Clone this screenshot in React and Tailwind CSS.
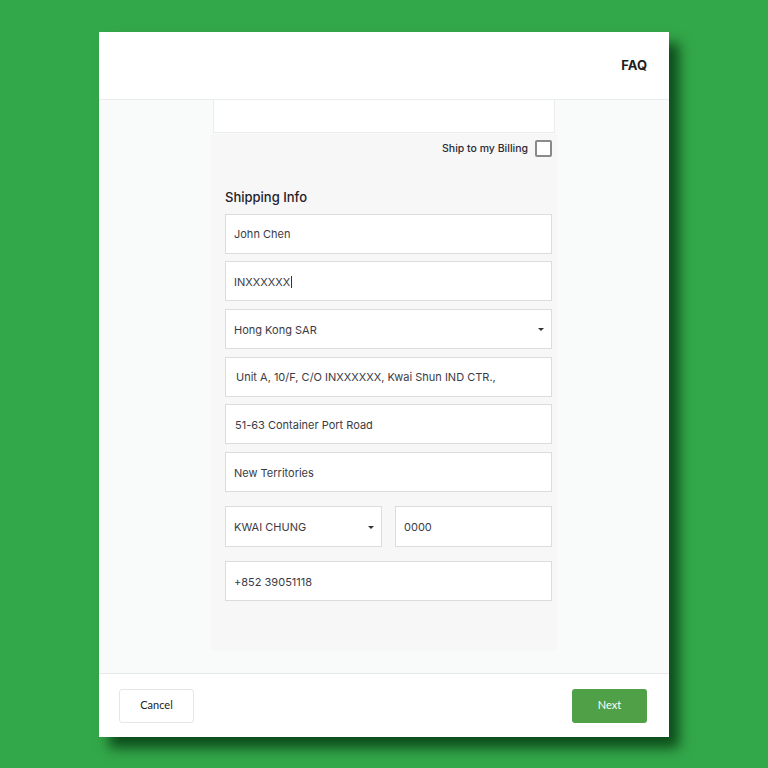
import React from 'react';

const font = { fontFamily: 'Inter, "Liberation Sans", sans-serif' };

function Field({ value, select, className = '', textClass = 'pl-[8px]', tall }) {
  return (
    <div
      className={`flex items-center justify-between border border-[#dcdcdc] bg-white pr-[7px] pt-[2px] ${tall ? 'h-[41px]' : 'h-[40px]'} ${className}`}
    >
      <span className={`text-[11px] text-[#3b3b45] ${textClass}`}>{value}</span>
      {select && <span className="h-0 w-0 border-x-[3px] border-t-[3px] border-x-transparent border-t-[#333]" />}
    </div>
  );
}

export default function App() {
  return (
    <div className="min-h-[768px] bg-[#33a84a] pt-[32px]" style={font}>
      <div className="mx-auto flex w-[570px] flex-col bg-white shadow-[10px_11px_12px_rgba(0,45,12,0.75)]">
        {/* Header */}
        <div className="flex h-[68px] items-center justify-end border-b border-[#ebeef0] pr-[22px]">
          <span className="text-[13px] font-bold text-[#1e1e1e]">FAQ</span>
        </div>

        {/* Body */}
        <div className="flex h-[573px] flex-col items-center bg-[#f9fbfb]">
          <div className="h-[33px] w-[342px] border-x border-b border-[#ececec] bg-white" />
          <div className="mt-px flex h-[517px] w-[346px] flex-col bg-[#f7f7f7] pl-[14px] pr-[5px]">
            <div className="flex items-center justify-end gap-[7px] pt-[6px]">
              <span className="text-[10.5px] font-medium text-[#2b2b33]">Ship to my Billing</span>
              <span className="h-[17px] w-[17px] rounded-[2px] border-2 border-[#8a8a8a] bg-white" />
            </div>
            <h2 className="mt-[31px] text-[13px] font-medium text-[#22222a]">Shipping Info</h2>
            <div className="mt-[6px] flex flex-col gap-[7.7px]">
              <Field value="John Chen" />
              <Field value={<>INXXXXXX<span className="ml-px inline-block h-[12px] w-px translate-y-[2px] bg-[#333]" /></>} />
              <Field value="Hong Kong SAR" select />
              <Field value="Unit A, 10/F, C/O INXXXXXX, Kwai Shun IND CTR.," textClass="pl-[10px]" />
              <Field value="51-63 Container Port Road" textClass="pl-[9px]" />
              <Field value="New Territories" />
            </div>
            <div className="mt-[14px] flex gap-[13px]">
              <Field value="KWAI CHUNG" select tall className="w-[157px]" />
              <Field value="0000" tall className="flex-1" />
            </div>
            <Field value="+852 39051118" className="mt-[14px]" />
          </div>
        </div>

        {/* Footer */}
        <div className="flex h-[64px] items-center justify-between border-t border-[#e6e9ec] pl-[20px] pr-[22px]" style={{ fontFamily: 'Lato, sans-serif' }}>
          <button className="h-[34px] w-[75px] rounded-[3px] border border-[#e6e6e6] bg-white text-[11px] text-[#222]">
            Cancel
          </button>
          <button className="h-[34px] w-[75px] rounded-[3px] bg-[#50a048] text-[11px] text-white">
            Next
          </button>
        </div>
      </div>
    </div>
  );
}
